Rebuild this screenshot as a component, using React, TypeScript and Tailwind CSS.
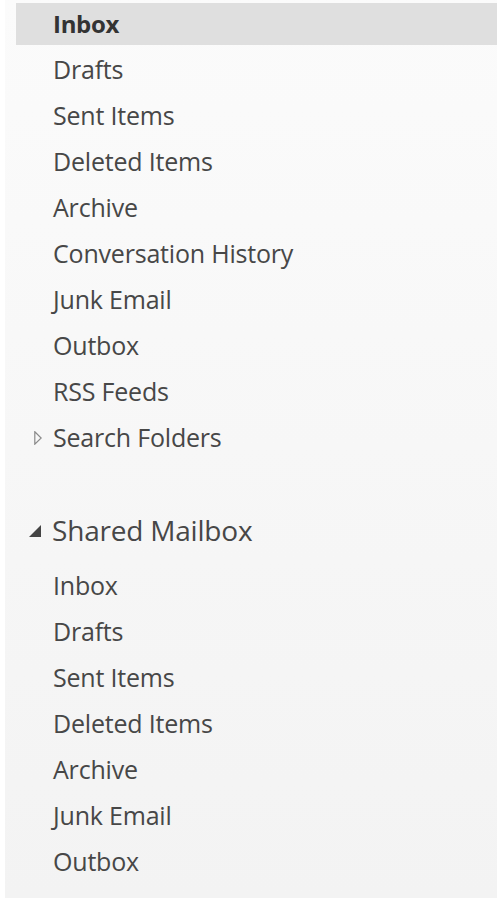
const mainFolders = [
  'Drafts',
  'Sent Items',
  'Deleted Items',
  'Archive',
  'Conversation History',
  'Junk Email',
  'Outbox',
  'RSS Feeds',
];

const sharedFolders = ['Inbox', 'Drafts', 'Sent Items', 'Deleted Items', 'Archive', 'Junk Email', 'Outbox'];

const font = { fontFamily: '"Open Sans", "Noto Sans", sans-serif' };

const Row = ({ label }: { label: string }) => (
  <div className="h-[46px] flex items-center pl-[37px] text-[25px] tracking-[-0.2px] text-[#474747]">{label}</div>
);

const App = () => {
  return (
    <div className="w-full h-[901px] bg-white pl-[5px] pb-[3px]" style={font}>
      <div className="h-full bg-gradient-to-b from-[#fbfbfb] to-[#f3f3f3] pl-[11px] pt-[1px]">
        {/* selected folder */}
        <div className="h-[46px] py-[2px]">
          <div className="h-full bg-[#dfdfdf] flex items-center pl-[37px] text-[24px] font-bold tracking-[-0.3px] text-[#333333]">
            Inbox
          </div>
        </div>
        {mainFolders.map((f) => (
          <Row key={f} label={f} />
        ))}
        <div className="h-[46px] flex items-center text-[25px] tracking-[-0.2px] text-[#474747]">
          <svg className="w-[8px] h-[14px] ml-[18px] mr-[11px]" viewBox="0 0 8 14">
            <path d="M0.8 0.8 L7.2 7 L0.8 13.2 Z" fill="none" stroke="#8a8a8a" strokeWidth="1.2" />
          </svg>
          Search Folders
        </div>
        <div className="h-[46px]" />
        <div className="h-[46px] flex items-center text-[28px] tracking-[-0.2px] text-[#474747]">
          <svg className="w-[12px] h-[12px] ml-[13px] mr-[11px] mt-[2px]" viewBox="0 0 12 12">
            <path d="M12 0 L12 12 L0 12 Z" fill="#444444" />
          </svg>
          Shared Mailbox
        </div>
        <div className="h-[10px]" />
        {sharedFolders.map((f, i) => (
          <Row key={i} label={f} />
        ))}
      </div>
    </div>
  );
};

export default App;
